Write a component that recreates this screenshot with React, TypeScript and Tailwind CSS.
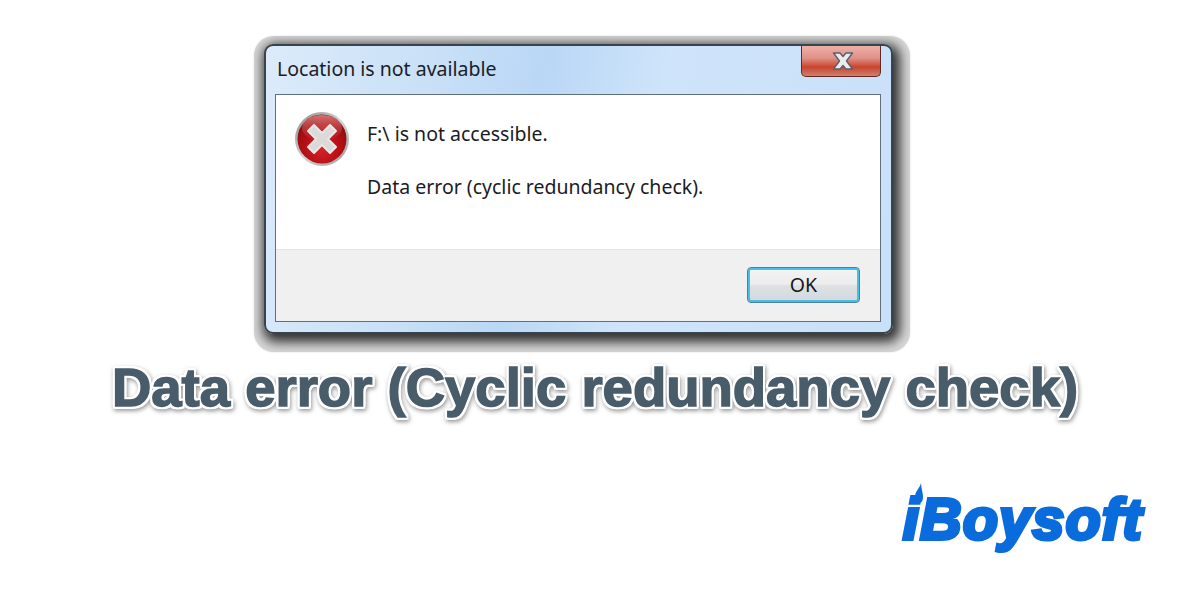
export default function App() {
  return (
    <div className="w-[1200px] h-[600px] bg-white overflow-hidden flex flex-col font-['Liberation_Sans',sans-serif]">
      {/* Dialog with its soft shadow */}
      <div className="mt-[36px] ml-[254px] w-[656px] h-[316px] rounded-[20px] bg-[#d8d8d8] shadow-[0_0_2px_#d8d8d8] overflow-hidden pl-[10px] pt-[8px]">
        <div className="w-[629px] h-[290px] rounded-[9px] border-2 border-[#38434c] bg-[linear-gradient(100deg,#dcebfa_0%,#c9e0f7_25%,#b9d7f6_42%,#cfe4fa_60%,#c9e0f9_100%)] shadow-[3px_4px_12px_4px_#303030] pl-[9px] pr-[10px] pb-[10px] flex flex-col">
          <div className="h-[48px] flex items-start justify-between">
            <span className="mt-[10px] ml-[2px] text-[19.5px] leading-[26px] text-[#1a2026] font-['Noto_Sans',sans-serif]">Location is not available</span>
            <div className="relative w-[80px] h-[31px] rounded-b-[5px] border border-t-0 border-[#5e2a24] bg-[linear-gradient(180deg,#eeb0a8_0%,#df9288_40%,#cf5a45_62%,#c9442d_70%,#d0806f_100%)] flex items-center justify-center">
              <svg width="22" height="18" viewBox="0 0 22 18" className="ml-[3px]">
                <path d="M1.5 1H8L11 4.5L14 1H20.5L14.5 9L20.5 17H14L11 13.5L8 17H1.5L7.5 9Z" fill="#e9ebee" stroke="#5b5f68" strokeWidth="1.4" strokeLinejoin="round" />
              </svg>
            </div>
          </div>
          <div className="flex-1 border border-[#5f6f7c] bg-white flex flex-col">
            <div className="h-[155px] flex items-start pl-[18px] pt-[16px] gap-[17px] border-b border-[#e4e4e4]">
              <svg width="56" height="56" viewBox="0 0 56 56" className="shrink-0">
                <defs>
                  <radialGradient id="red" cx="50%" cy="70%" r="62%">
                    <stop offset="0%" stopColor="#d4222a" />
                    <stop offset="60%" stopColor="#b50f14" />
                    <stop offset="100%" stopColor="#8c0e12" />
                  </radialGradient>
                  <linearGradient id="ring" x1="0" y1="0" x2="1" y2="1">
                    <stop offset="0%" stopColor="#8a8a8a" />
                    <stop offset="50%" stopColor="#d4d4d4" />
                    <stop offset="100%" stopColor="#9a9a9a" />
                  </linearGradient>
                  <linearGradient id="gloss" x1="0" y1="0" x2="0" y2="1">
                    <stop offset="0%" stopColor="#e88a8a" stopOpacity="0.8" />
                    <stop offset="100%" stopColor="#d85050" stopOpacity="0.05" />
                  </linearGradient>
                </defs>
                <circle cx="28" cy="28" r="27" fill="url(#ring)" />
                <circle cx="28" cy="28" r="24.5" fill="url(#red)" />
                <ellipse cx="28" cy="17" rx="20" ry="13" fill="url(#gloss)" />
                <path d="M20 14L28 22L36 14L42 20L34 28L42 36L36 42L28 34L20 42L14 36L22 28L14 20Z" fill="#dcd9d9" stroke="#e9e6e6" strokeWidth="2" strokeLinejoin="round" />
              </svg>
              <div className="pt-[10px] text-[19.5px] leading-[26px] text-[#1b1b1f] font-['Noto_Sans',sans-serif]">
                <div>F:\ is not accessible.</div>
                <div className="mt-[27px]">Data error (cyclic redundancy check).</div>
              </div>
            </div>
            <div className="flex-1 bg-[#f0f0f0] flex items-start justify-end pt-[17px] pr-[20px]">
              <div className="w-[113px] h-[36px] rounded-[4px] border border-[#4f7f9b] shadow-[inset_0_0_0_2px_#45bfe6] bg-[linear-gradient(180deg,#f4f4f4_0%,#ececec_48%,#dde1e5_52%,#d3d9de_100%)] flex items-center justify-center text-[19.5px] text-[#16161c] font-['Noto_Sans',sans-serif]">OK</div>
            </div>
          </div>
        </div>
      </div>

      {/* Headline */}
      <div className="mt-[1px] h-[70px] flex items-center justify-center pr-[10px]">
        <h1 className="text-[54.5px] leading-[70px] font-bold whitespace-nowrap text-[#495c6a] [-webkit-text-stroke:1.5px_#495c6a] [filter:drop-shadow(2px_0_0_white)_drop-shadow(-2px_0_0_white)_drop-shadow(0_2px_0_white)_drop-shadow(0_-2px_0_white)_drop-shadow(1px_2px_2px_rgba(70,70,70,0.55))]">Data error (Cyclic redundancy check)</h1>
      </div>

      {/* Logo */}
      <div className="mt-[64px] flex justify-end pr-[57px]">
        <div className="relative">
          <svg width="10" height="20" viewBox="0 0 10 20" className="absolute left-[11px] top-[-4px]">
            <path d="M7 0C6 5 1 8 1 14C1 18 3 20 5 20C8 20 9 17 9 14C9 9 7 5 7 0Z" fill="#0a6cdc" />
          </svg>
          <span className="text-[57px] leading-[64px] font-bold italic text-[#0a6cdc] [-webkit-text-stroke:4px_#0a6cdc] tracking-[1.5px]">iBoysoft</span>
        </div>
      </div>
    </div>
  );
}
